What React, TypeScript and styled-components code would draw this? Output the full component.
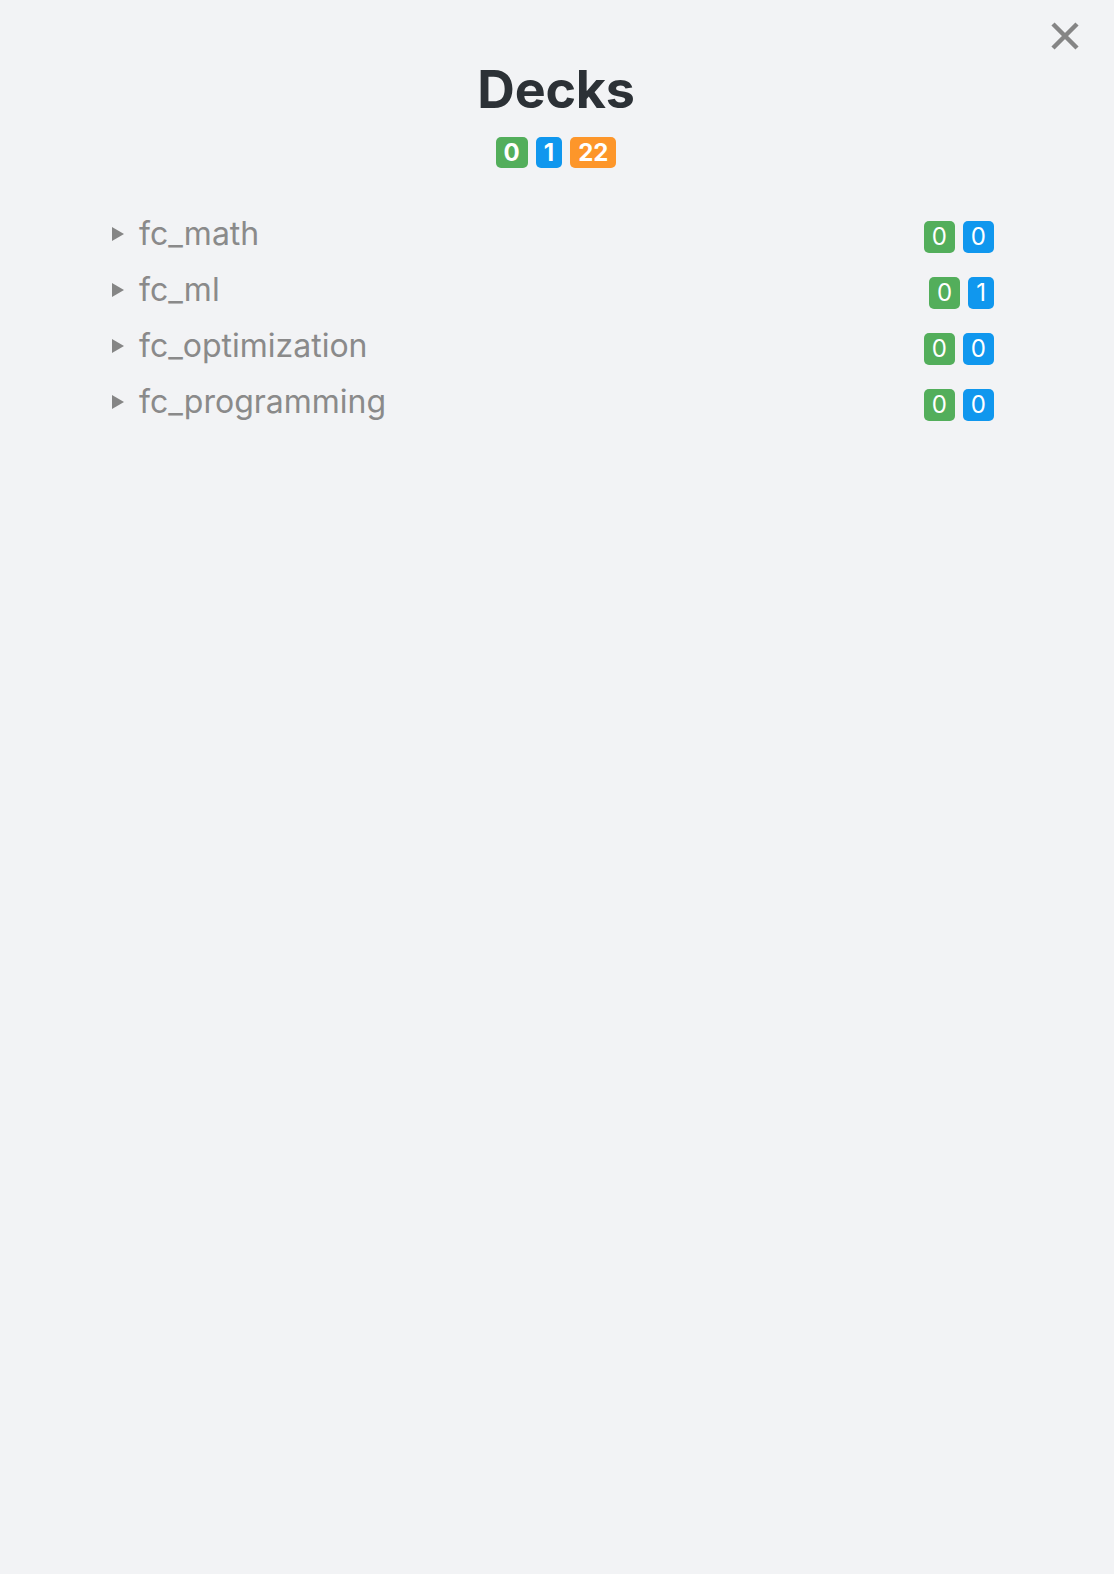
import React from "react";
import styled, { createGlobalStyle } from "styled-components";

const Global = createGlobalStyle`
  html, body { margin: 0; padding: 0; background: #f2f3f5; }
  body { font-family: Inter, "Noto Sans", sans-serif; }
  #root { min-height: 1574px; background: #f2f3f5; }
`;

const Page = styled.div`
  position: relative;
  min-height: 1574px;
  box-sizing: border-box;
  padding: 58px 120px 0 112px;
`;

const CloseButton = styled.button`
  position: absolute;
  top: 20px;
  right: 33px;
  width: 32px;
  height: 32px;
  padding: 0;
  border: none;
  background: none;
  display: flex;
  align-items: center;
  justify-content: center;
  cursor: pointer;
`;

const Header = styled.header`
  display: flex;
  flex-direction: column;
  align-items: center;
`;

const Title = styled.h1`
  margin: 0 0 0 6px;
  font-size: 52px;
  line-height: 64px;
  font-weight: 700;
  color: #2c3136;
  letter-spacing: -0.2px;
`;

const Badges = styled.div<{ $gap: number }>`
  display: flex;
  gap: ${(p) => p.$gap}px;
  align-items: center;
`;

const HeaderBadges = styled(Badges)`
  margin-top: 15px;
  margin-left: 6px;
`;

type Tone = "green" | "blue" | "orange";
const toneColor: Record<Tone, string> = {
  green: "#53ae5b",
  blue: "#1097ee",
  orange: "#fd962a",
};

const Badge = styled.span<{ $tone: Tone; $big?: boolean }>`
  display: inline-flex;
  align-items: center;
  justify-content: center;
  box-sizing: border-box;
  height: ${(p) => (p.$big ? 31 : 32)}px;
  padding: 0 8px;
  border-radius: 5px;
  background: ${(p) => toneColor[p.$tone]};
  color: #fff;
  font-size: 24px;
  font-weight: ${(p) => (p.$big ? 700 : 400)};
  line-height: 1;
`;

const DeckList = styled.ul`
  list-style: none;
  margin: 38px 0 0;
  padding: 0;
  display: flex;
  flex-direction: column;
`;

const DeckRow = styled.li`
  display: flex;
  align-items: center;
  height: 56px;
`;

const Caret = styled.span`
  width: 0;
  height: 0;
  border-top: 7px solid transparent;
  border-bottom: 7px solid transparent;
  border-left: 12px solid #858585;
  margin-right: 15px;
`;

const DeckName = styled.span`
  flex: 1;
  font-size: 32px;
  color: #8a8a8a;
  font-weight: 400;
  margin-top: -2px;
`;

const RowBadges = styled(Badges)`
  margin-top: 6px;
`;

const decks = [
  { name: "fc_math", a: 0, b: 0 },
  { name: "fc_ml", a: 0, b: 1 },
  { name: "fc_optimization", a: 0, b: 0 },
  { name: "fc_programming", a: 0, b: 0 },
];

export default function App() {
  return (
    <>
      <Global />
      <Page>
        <CloseButton aria-label="Close">
          <svg width="30" height="30" viewBox="0 0 30 30">
            <path d="M3 3 L27 27 M27 3 L3 27" stroke="#858585" strokeWidth="4.5" strokeLinecap="butt" />
          </svg>
        </CloseButton>
        <Header>
          <Title>Decks</Title>
          <HeaderBadges $gap={8}>
            <Badge $tone="green" $big>0</Badge>
            <Badge $tone="blue" $big>1</Badge>
            <Badge $tone="orange" $big>22</Badge>
          </HeaderBadges>
        </Header>
        <DeckList>
          {decks.map((d) => (
            <DeckRow key={d.name}>
              <Caret />
              <DeckName>{d.name}</DeckName>
              <RowBadges $gap={8}>
                <Badge $tone="green">{d.a}</Badge>
                <Badge $tone="blue">{d.b}</Badge>
              </RowBadges>
            </DeckRow>
          ))}
        </DeckList>
      </Page>
    </>
  );
}
